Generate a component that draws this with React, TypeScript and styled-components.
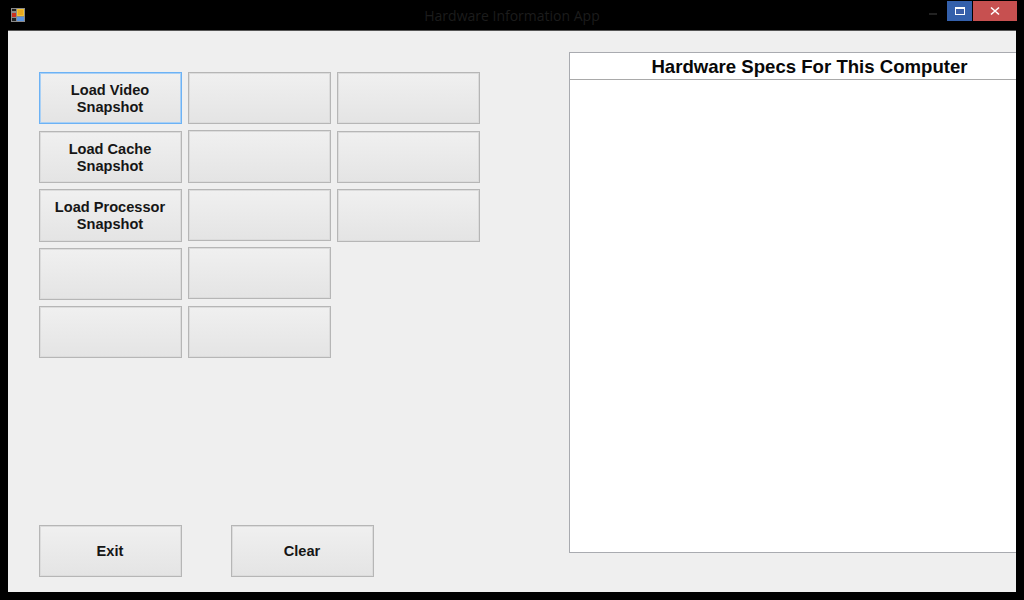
import React from "react";
import styled, { createGlobalStyle } from "styled-components";

const GlobalStyle = createGlobalStyle`
    html, body {
        margin: 0;
        padding: 0;
        background: #000;
    }
`;

const Window = styled.div`
    width: 1024px;
    height: 600px;
    background: #000;
    display: flex;
    flex-direction: column;
    overflow: hidden;
    padding: 0 8px 8px;
    box-sizing: border-box;
`;

const TitleBar = styled.div`
    height: 30px;
    margin: 0 -8px;
    display: flex;
    align-items: flex-start;
    position: relative;
    flex: none;
`;

const AppIcon = styled.svg`
    width: 14px;
    height: 14px;
    margin: 8px 0 0 11px;
`;

const Title = styled.div`
    position: absolute;
    left: 0;
    right: 0;
    top: 6px;
    text-align: center;
    font: 14px/20px "Open Sans", sans-serif;
    color: #1c1c1c;
`;

const WindowControls = styled.div`
    margin-left: auto;
    margin-right: 7px;
    display: flex;
    align-items: flex-start;
    gap: 1px;
`;

const MinimizeGlyph = styled.div`
    width: 8px;
    height: 2px;
    background: #222;
    margin: 13px 9px 0 0;
`;

const ControlButton = styled.div<{ $width: number; $bg: string }>`
    width: ${p => p.$width}px;
    height: 20px;
    margin-top: 1px;
    background: ${p => p.$bg};
    display: flex;
    align-items: center;
    justify-content: center;
`;

const MaximizeGlyph = styled.div`
    width: 8px;
    height: 5px;
    border: 1px solid #fff;
    border-top-width: 2px;
    background: #3b5fa8;
`;

const Client = styled.div`
    flex: 1;
    background: #efefef;
    display: flex;
    border-top: 1px solid #555;
    box-sizing: border-box;
`;

const LeftSide = styled.div`
    width: 561px;
    flex: none;
    display: flex;
    flex-direction: column;
    justify-content: space-between;
    padding: 41px 0 15px 31px;
    box-sizing: border-box;
`;

const ButtonGrid = styled.div`
    display: flex;
    gap: 6px;
    align-items: flex-start;
`;

const ButtonColumn = styled.div`
    display: flex;
    flex-direction: column;
    gap: 6.1px;
`;

const ActionButton = styled.button<{ $focused?: boolean; $top?: number }>`
    width: 143px;
    height: 52.3px;
    margin: ${p => p.$top ?? 0}px 0 0;
    padding: 2px 1px 0 0;
    box-sizing: border-box;
    border: 1px solid ${p => (p.$focused ? "#6cb2f5" : "#b6b6b6")};
    box-shadow: inset 0 0 0 1px ${p => (p.$focused ? "#a9d0f5" : "#dcdcdc")};
    background: linear-gradient(#f0f0f0, #e4e4e4);
    font: bold 14.6px/17px "Liberation Sans", Arial, sans-serif;
    color: #161616;
`;

const BottomRow = styled.div`
    display: flex;
    gap: 49px;
`;

const SpecsPanel = styled.div`
    width: 447px;
    height: 501px;
    margin-top: 21px;
    background: #fff;
    border: 1px solid #a9abb0;
    border-right: none;
    box-sizing: border-box;
`;

const SpecsHeader = styled.div`
    height: 26px;
    padding-left: 33px;
    border-bottom: 1px solid #a9a9a9;
    box-sizing: content-box;
    text-align: center;
    font: bold 18.6px/28px "Liberation Sans", Arial, sans-serif;
    color: #080808;
`;

const columns = [
    {
        offset: 0.5,
        labels: ["Load Video\nSnapshot", "Load Cache\nSnapshot", "Load Processor\nSnapshot", "", ""],
    },
    { offset: 0, labels: ["", "", "", "", ""] },
    { offset: 0.5, labels: ["", "", ""] },
];

const MultiLine: React.FC<{ text: string }> = ({ text }) => (
    <>
        {text.split("\n").map(line => (
            <div key={line}>{line}</div>
        ))}
    </>
);

export default function App() {
    return (
        <Window>
            <GlobalStyle />
            <TitleBar>
                <AppIcon viewBox="0 0 14 14">
                    <rect width="14" height="14" fill="#8a8a8a" />
                    <rect x="6" y="1" width="7" height="7" fill="#f2c230" />
                    <rect x="7" y="2" width="5" height="5" fill="#e8a820" />
                    <rect x="6" y="9" width="7" height="4" fill="#5a94e0" />
                    <rect x="1" y="1" width="4" height="2" fill="#222" />
                    <rect x="1" y="5" width="4" height="4" fill="#c8301f" />
                    <rect x="1" y="10" width="4" height="3" fill="#222" />
                </AppIcon>
                <Title>Hardware Information App</Title>
                <WindowControls>
                    <MinimizeGlyph />
                    <ControlButton $width={25} $bg="#3460ab">
                        <MaximizeGlyph />
                    </ControlButton>
                    <ControlButton $width={44} $bg="#c75050">
                        <svg width="10" height="10" viewBox="0 0 10 10">
                            <path d="M1 1.5L9 8.5M9 1.5L1 8.5" stroke="#fff" strokeWidth="1.6" />
                        </svg>
                    </ControlButton>
                </WindowControls>
            </TitleBar>
            <Client>
                <LeftSide>
                    <ButtonGrid>
                        {columns.map((column, i) => (
                            <ButtonColumn key={i}>
                                {column.labels.map((label, j) => (
                                    <ActionButton
                                        key={j}
                                        $focused={i === 0 && j === 0}
                                        $top={j === 1 ? column.offset : 0}
                                    >
                                        <MultiLine text={label} />
                                    </ActionButton>
                                ))}
                            </ButtonColumn>
                        ))}
                    </ButtonGrid>
                    <BottomRow>
                        <ActionButton>Exit</ActionButton>
                        <ActionButton>Clear</ActionButton>
                    </BottomRow>
                </LeftSide>
                <SpecsPanel>
                    <SpecsHeader>Hardware Specs For This Computer</SpecsHeader>
                </SpecsPanel>
            </Client>
        </Window>
    );
}
